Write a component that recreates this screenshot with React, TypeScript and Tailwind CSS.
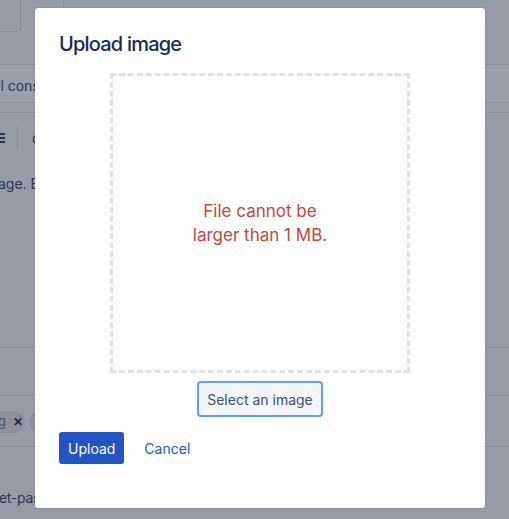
import React from "react";

const sans = { fontFamily: "Inter, 'Liberation Sans', sans-serif" };

function PageBehind() {
  return (
    <div className="flex flex-col w-full text-[14px] text-[#2b3753]" style={sans}>
      {/* header cards */}
      <div className="h-[32px] flex">
        <div className="w-[21px] h-full border-r border-b border-[#8a8f9c] rounded-br-[4px]" />
        <div className="ml-[42px] h-full border-l border-[#8a8f9c]" />
      </div>
      <div className="h-[32px]" />
      {/* command input */}
      <div className="h-[39px] border-t border-b border-[#8a8f9c] flex items-center pt-[4px] bg-[#9a9eaa]">
        <span className="-ml-[3px] whitespace-nowrap">ll console output</span>
      </div>
      <div className="h-[10px] border-b border-[#8a8f9c]" />
      {/* editor toolbar */}
      <div className="h-[50px] flex items-center">
        <svg width="8" height="12" viewBox="0 0 8 12" className="text-[#2b3753]">
          <rect x="-4" y="1" width="9" height="2" fill="currentColor" />
          <rect x="-4" y="5" width="9" height="2" fill="currentColor" />
          <rect x="-4" y="9" width="9" height="2" fill="currentColor" />
        </svg>
        <div className="ml-[9px] w-px h-[24px] bg-[#8a8f9c]" />
        <span className="ml-[14px] text-[15px] leading-none">c</span>
      </div>
      <div className="h-[40px] flex items-center">
        <span className="-ml-[2px] whitespace-nowrap">age. Browse for a file</span>
      </div>
      <div className="h-[145px] border-b border-[#8a8f9c]" />
      <div className="h-[48px] border-b border-[#8a8f9c]" />
      {/* tags */}
      <div className="h-[51px] border-b border-[#8a8f9c] flex items-center pt-[2px]">
        <div className="h-[22px] w-[25px] rounded-r-full bg-[#8c919d] flex items-center">
          <span className="text-[#4a5268] text-[13px] -ml-[2px]">g</span>
          <span className="ml-[7px] text-[12px] font-bold text-[#1f2a44]">✕</span>
        </div>
        <div className="ml-[4px] h-[22px] w-[40px] rounded-full bg-[#8c919d]" />
      </div>
      <div className="h-[100px] flex items-center">
        <span className="-ml-[1px] whitespace-nowrap tracking-[-0.3px]">et-paste</span>
      </div>
    </div>
  );
}

export default function App() {
  return (
    <div className="relative w-[509px] h-[519px] overflow-hidden bg-[#979ba7]">
      <PageBehind />
      <div
        className="absolute left-[35px] top-[8px] w-[450px] h-[500px] bg-white rounded-[3px] shadow-[0_0_2px_rgba(9,30,66,0.2)] flex flex-col px-[24px] pt-[22px]"
        style={sans}
      >
        <h1 className="text-[20px] leading-[28px] font-medium tracking-[-0.8px] text-[#172b4d]">Upload image</h1>
        <div className="mt-[15px] self-center w-[300px] h-[300px] border-[3px] border-dashed border-[#dfe1e6] flex items-center justify-center">
          <p className="text-[17px] leading-[24px] text-[#c4473a] text-center w-[160px]">
            File cannot be larger than 1 MB.
          </p>
        </div>
        <button className="mt-[8px] self-center h-[36px] px-[8px] rounded-[4px] border-2 border-[#639cf3] bg-[#f4f5f7] text-[14px] text-[#42526e]">
          Select an image
        </button>
        <div className="mt-[15px] flex items-center gap-[20px]">
          <button className="h-[32px] px-[9px] rounded-[3px] bg-[#2354c6] text-white text-[14px]">Upload</button>
          <button className="h-[32px] text-[14px] text-[#2256c8]">Cancel</button>
        </div>
      </div>
    </div>
  );
}
